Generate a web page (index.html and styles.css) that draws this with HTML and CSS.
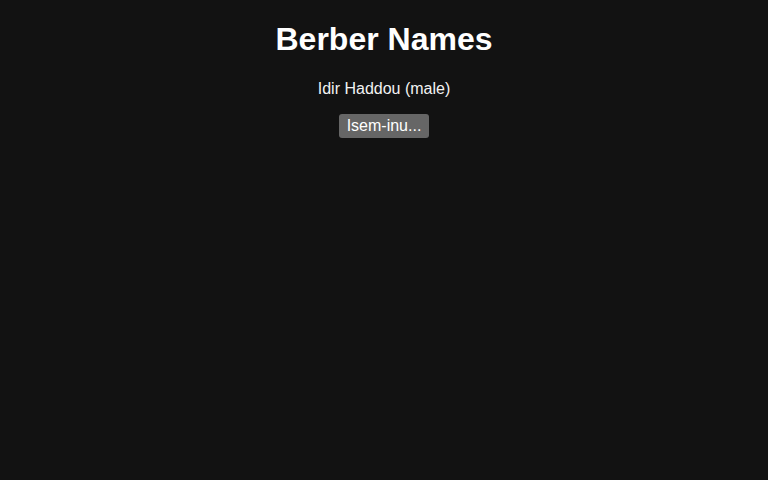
FILE: index.html
```html
<!DOCTYPE html>
<html lang="en">

<head>
    <meta charset="UTF-8">
    <meta name="viewport" content="width=device-width, initial-scale=1.0">
    <title>Berber Names</title>
    <link rel="stylesheet" href="styles.css">
</head>

<body>

    <div class="container">
        <h1>Berber Names</h1>
        <p id="name">Idir Haddou (male)</p>
        <button type="button" class="btn">Isem-inu...</button>
    </div>

</body>

</html>
```

FILE: styles.css
```css
body {
    font-family: "Liberation Sans", Arial, sans-serif;
    margin: 0;
    padding: 0;
    background-color: #121212;
    color: #fff;
}

.container {
    text-align: center;
    padding: 0.1px 0;
}

h1 {
    font-size: 32px;
    margin: 21px 0 22px;
}

p {
    font-size: 16px;
    margin: 16px 0;
    color: #f2f2f2;
}

.btn {
    font-family: inherit;
    font-size: 16px;
    background-color: #666;
    color: #fff;
    border: none;
    border-radius: 3px;
    padding: 3px 8px;
    cursor: pointer;
}

.btn:hover {
    background-color: #777;
}
```
